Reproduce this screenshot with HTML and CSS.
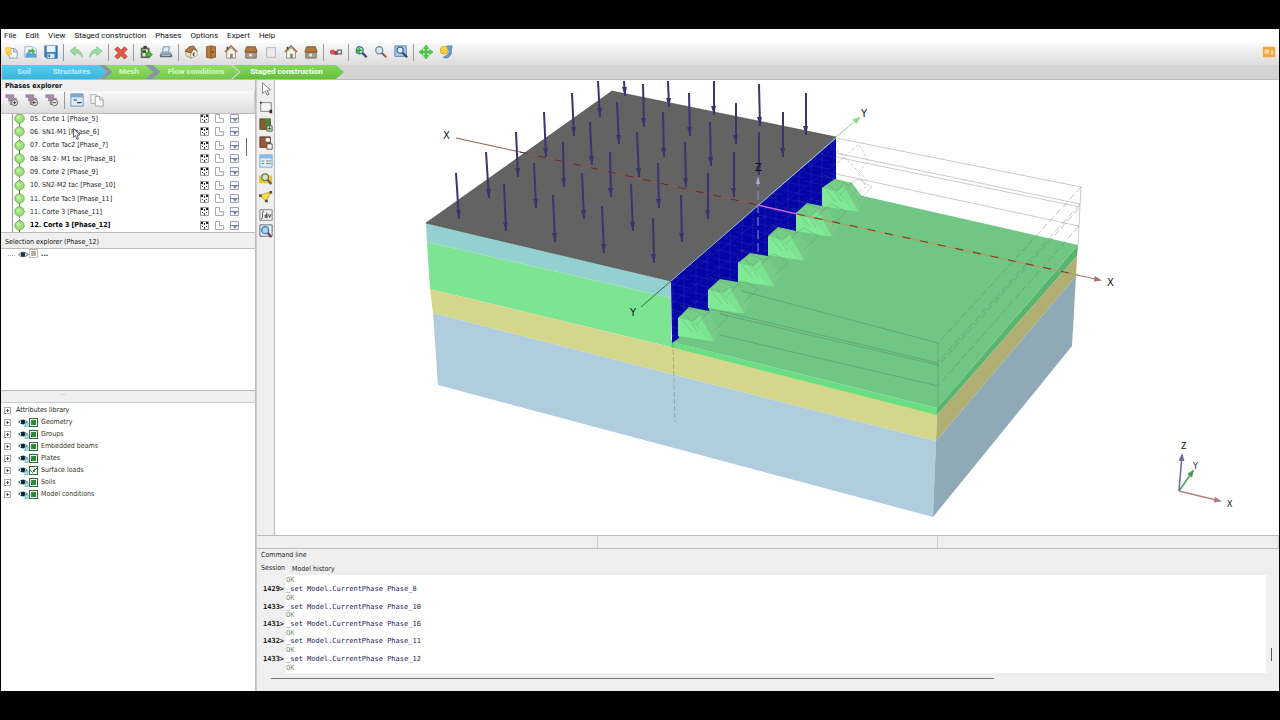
FILE: index.html
```
<!DOCTYPE html>
<html lang="en">

<head>
    <meta charset="UTF-8">
    <title>Staged construction</title>
    <link rel="stylesheet" href="styles.css">
</head>

<body>
    <!-- Icon sprite -->
    <svg class="sprite">
        <symbol id="i-new" viewBox="0 0 16 16"><path d="M6 4h6l3 3v8H6z" fill="#fff" stroke="#7d93b5"/><path d="M11 4v4h4" fill="#cfdcf0" stroke="#7d93b5"/><path d="M1 4l7-2 1 9-6 1z" fill="#f4c544"/><circle cx="4" cy="5" r="3" fill="#fbd65b"/></symbol>
        <symbol id="i-open" viewBox="0 0 16 16"><path d="M1 2h9l4 3v9H1z" fill="#fff" stroke="#88a9cf"/><path d="M2 10l4-3 3 3 2-2 3 3v3H2z" fill="#58a8d4"/><path d="M5 5h4V3l4 4-4 3V8H5z" fill="#4fae4c"/></symbol>
        <symbol id="i-save" viewBox="0 0 16 16"><path d="M1 1h14v14H3l-2-2z" fill="#3e83bb" stroke="#245f94"/><path d="M3 1h10v7H3z" fill="#eaf4fb"/><path d="M4 10h8v5H4z" fill="#dce8ef"/><path d="M5 11h2v3H5z" fill="#3a6a91"/></symbol>
        <symbol id="i-undo" viewBox="0 0 16 16"><path d="M1 7l6-5v3c5 0 8 4 8 9-2-4-4-5-8-5v3z" fill="#9bdba3" stroke="#86c98f"/></symbol>
        <symbol id="i-redo" viewBox="0 0 16 16"><path d="M15 7L9 2v3c-5 0-8 4-8 9 2-4 4-5 8-5v3z" fill="#9bdba3" stroke="#86c98f"/></symbol>
        <symbol id="i-delete" viewBox="0 0 16 16"><path d="M4 2l4 4 4-4 3 3-4 4 4 4-3 3-4-4-4 4-3-3 4-4-4-4z" fill="#e05a48" stroke="#bb4436"/></symbol>
        <symbol id="i-clip" viewBox="0 0 16 16"><path d="M2 3h10v12H2z" fill="#5d6a52"/><path d="M5 1h4v3H5z" fill="#444"/><path d="M4 5h6v8H4z" fill="#dde6cf"/><path d="M4 6h4v3H4z" fill="#3b4a34"/><path d="M8 9h3V7l4 4-4 4v-2H8z" fill="#4ab53c" stroke="#2e8527"/></symbol>
        <symbol id="i-print" viewBox="0 0 16 16"><path d="M5 2h7l-1 6H4z" fill="#d8ecf9" stroke="#6f8ca4"/><path d="M2 8h12l1 4H1z" fill="#9ca8b4"/><path d="M1 11h14v3H1z" fill="#5b6b79"/><path d="M3 12h10" stroke="#bcd"/></symbol>
        <symbol id="i-house3d" viewBox="0 0 16 16"><path d="M2 7l6 2v6l-6-3z" fill="#e9dcc5" stroke="#8a7a66" stroke-width=".7"/><path d="M8 9l3-4 4 2v5l-7 3z" fill="#fff" stroke="#8a7a66" stroke-width=".7"/><path d="M1 7l5-5 5-1 4 6-4-3-3 5z" fill="#b57742" stroke="#704420" stroke-width=".8"/><path d="M10 9l2-1v4l-2 1z" fill="#5a4a3a"/></symbol>
        <symbol id="i-door" viewBox="0 0 16 16"><path d="M3 2l5-1 5 1v12l-5 1-5-1z" fill="#b9803e" stroke="#7a4e20"/><path d="M8 1v14" stroke="#7a4e20"/><circle cx="10" cy="8" r="1" fill="#5a3510"/></symbol>
        <symbol id="i-house" viewBox="0 0 16 16"><path d="M3 8l5-5 5 5v7H3z" fill="#f6f4ee" stroke="#8a8478"/><path d="M1 8l7-7 7 7" fill="none" stroke="#9a6b3c" stroke-width="1.600"/><path d="M7 10h3v5H7z" fill="#8d8070"/><path d="M3 2h2v3H3z" fill="#5b4631"/></symbol>
        <symbol id="i-roof" viewBox="0 0 16 16"><path d="M2 8h12v7H2z" fill="#a69a88" stroke="#776c5c"/><path d="M3 2h10l2 6H1z" fill="#b47a3f" stroke="#7d4f22"/><path d="M6 10h3v3H6z" fill="#eee"/></symbol>
        <symbol id="i-box" viewBox="0 0 16 16"><path d="M3 3h10v11H3z" fill="#ececec" stroke="#a9b0b8"/></symbol>
        <symbol id="i-link" viewBox="0 0 16 16"><circle cx="4" cy="8" r="3" fill="#d65555"/><circle cx="8" cy="9" r="2.500" fill="#b23c3c"/><path d="M9 5h6v6H9z" fill="#6f7276"/><circle cx="12" cy="8" r="1.600" fill="#eee"/></symbol>
        <symbol id="i-zoomin" viewBox="0 0 16 16"><circle cx="6.500" cy="6" r="4" fill="#bfe8c0" stroke="#4a7f9d" stroke-width="1.500"/><path d="M9.500 9l5 5" stroke="#384a72" stroke-width="2.500"/><path d="M3 6h6M6 3v6M2 9l4-3" stroke="#37a63a" stroke-width="1.500"/></symbol>
        <symbol id="i-zoomout" viewBox="0 0 16 16"><circle cx="6" cy="6" r="4" fill="#dbe7f5" stroke="#7a8fb0" stroke-width="1.500"/><path d="M9 9l3 3" stroke="#42507c" stroke-width="2"/><path d="M11 11l3 3" stroke="#b35c48" stroke-width="2.500"/></symbol>
        <symbol id="i-zoomfit" viewBox="0 0 16 16"><path d="M1 1h13v12H1z" fill="#a9cdec" stroke="#4d7aa8"/><circle cx="7" cy="6" r="3.500" fill="#dfeefc" stroke="#3f689b" stroke-width="1.400"/><path d="M10 9l5 5" stroke="#3b4673" stroke-width="2.500"/></symbol>
        <symbol id="i-move" viewBox="0 0 16 16"><path d="M8 0l3 4H9v3h3V5l4 3-4 3V9H9v3h2l-3 4-3-4h2V9H4v2L0 8l4-3v2h3V4H5z" fill="#4fd046" stroke="#2fae2c" stroke-width=".8"/></symbol>
        <symbol id="i-rotate" viewBox="0 0 16 16"><path d="M9 1l6 0-1 5c1 4-1 8-6 9l-3-1 5-3 2-4-3-2z" fill="#5f9fd8" stroke="#3c74ab" stroke-width=".7"/><circle cx="6" cy="6" r="4.500" fill="#f5d33f" stroke="#cfa31c"/></symbol>
        <symbol id="i-add" viewBox="0 0 16 16"><path d="M1 2h9v3H1zM4 6h9v3H4z" fill="#a58fa9" stroke="#7c607f" stroke-width=".6"/><path d="M6 9v4h2" stroke="#666" fill="none"/><circle cx="11" cy="11" r="3.500" fill="#f2e9ef" stroke="#555"/><path d="M9 11h4M11 9v4" stroke="#333"/></symbol>
        <symbol id="i-sub" viewBox="0 0 16 16"><path d="M1 2h9v3H1zM4 6h9v3H4z" fill="#a58fa9" stroke="#7c607f" stroke-width=".6"/><path d="M6 9v4h2" stroke="#666" fill="none"/><circle cx="11" cy="11" r="3.500" fill="#f2e9ef" stroke="#555"/><path d="M9 11h4" stroke="#333"/></symbol>
        <symbol id="i-ins" viewBox="0 0 16 16"><path d="M1 2h9v3H1zM4 6h9v3H4z" fill="#a58fa9" stroke="#7c607f" stroke-width=".6"/><path d="M6 9v4h2" stroke="#666" fill="none"/><circle cx="11" cy="11" r="3.500" fill="#f2e9ef" stroke="#555"/><path d="M9 11h4M11 9l-2 2 2 2" stroke="#333" fill="none"/></symbol>
        <symbol id="i-window" viewBox="0 0 16 16"><path d="M1 1h14v14H1z" fill="#dcebf7" stroke="#6b8fb1"/><path d="M1 1h14v4H1z" fill="#7fa8d0"/><path d="M4 8h4M8 11h5" stroke="#26446b" stroke-width="1.400"/></symbol>
        <symbol id="i-copy" viewBox="0 0 16 16"><path d="M1 2h6l3 2v8H1z" fill="#f4f4f4" stroke="#a8a8a8"/><path d="M6 4h5l4 3v8H6z" fill="#fafafa" stroke="#a0a0a0"/><path d="M11 4v4h4" fill="none" stroke="#a0a0a0"/></symbol>
        <symbol id="i-arrow" viewBox="0 0 16 16"><path d="M4 1l9 8-4 .5 2.500 4.500-2 1-2.300-4.500L4 13z" fill="#fff" stroke="#777"/></symbol>
        <symbol id="i-select" viewBox="0 0 16 16"><path d="M2 3h12v10H2z" fill="#f4f4f4" stroke="#777"/><path d="M1 2h2v2H1zM12 11h3v4h-3z" fill="#3b2528"/></symbol>
        <symbol id="i-soil" viewBox="0 0 16 16"><path d="M1 1h12v12H1z" fill="#8d5a34" stroke="#5e3d22"/><path d="M7 1h6v9H7z" fill="#4b8440"/><path d="M9 9h6v6H9z" fill="#cfe0cc" stroke="#39693b"/><path d="M12 10v4M10 12h4" stroke="#39693b"/></symbol>
        <symbol id="i-cut" viewBox="0 0 16 16"><path d="M1 1h12v12H1z" fill="#98583a" stroke="#693820"/><path d="M7 2h6v5H7zM9 9h6v6H9z" fill="#fff" stroke="#5e4033"/></symbol>
        <symbol id="i-table" viewBox="0 0 16 16"><path d="M1 1h14v14H1z" fill="#dff0fb" stroke="#6fa0cb"/><path d="M1 1h14v4H1z" fill="#86bce8"/><path d="M3 8h3M8 8h6M3 11h3M8 11h6" stroke="#776"/></symbol>
        <symbol id="i-find" viewBox="0 0 16 16"><path d="M0 4h15v9H0z" fill="#e8c83a"/><circle cx="7" cy="6" r="3.800" fill="#cfe6c9" stroke="#6b7b43" stroke-width="1.400"/><path d="M10 9l4 5" stroke="#5b4f72" stroke-width="2.500"/></symbol>
        <symbol id="i-tri" viewBox="0 0 16 16"><path d="M1 6l13-4-6 11z" fill="#fbe04a" stroke="#b3962a"/><path d="M0 5h3v3H0zM12 1h3v3h-3zM7 11h3v3H7z" fill="#4f4a32"/></symbol>
        <symbol id="i-integral" viewBox="0 0 16 16"><path d="M1 2h14v12H1z" fill="#f3f3f3" stroke="#777"/><path d="M6 4c-2-1-2 1-2 4s0 5-2 4M7 8h2v3H7zM9 11V5M11 7l1 4 2-4" fill="none" stroke="#333"/></symbol>
        <symbol id="i-probe" viewBox="0 0 16 16"><path d="M1 1h14v13H1z" fill="#e3eef7" stroke="#51606d"/><circle cx="7" cy="7" r="4" fill="#aed3f3" stroke="#3f77a8" stroke-width="1.500"/><path d="M10 10l4 5" stroke="#6a3d50" stroke-width="2.500"/></symbol>
        <symbol id="i-3d" viewBox="0 0 16 16"><path d="M1 2h14v12H1z" fill="#f0a63c"/><path d="M3 5h5v5H3zM10 6h3v5h-3z" fill="#f8d79c"/></symbol>
        <symbol id="r-dots" viewBox="0 0 9 9"><path d="M.5.5h8v8h-8z" fill="#fff" stroke="#999"/><path d="M1 1h2v2H1zM6 1h2v2H6zM4 2h1v2H4zM2 5h1v1H2zM6 5h1v1H6zM4 6h1v2H4z" fill="#222"/></symbol>
        <symbol id="r-mesh" viewBox="0 0 9 9"><path d="M.5.5h4v4h4v4h-8z" fill="#fff" stroke="#aaa"/></symbol>
        <symbol id="r-water" viewBox="0 0 9 9"><path d="M.5.5h8v8h-8z" fill="#f4f7fa" stroke="#9aa5b1"/><path d="M0 4h9v1H0zM3 5h4L5 8z" fill="#7787a3"/></symbol>
        <symbol id="r-node" viewBox="0 0 11 13"><path d="M5.500 0v13" stroke="#5f7f50"/><circle cx="5.500" cy="6.500" r="4.700" fill="#9de07c" stroke="#5fa548" stroke-width=".8"/><circle cx="4.500" cy="5.500" r="2" fill="#bff0a4"/></symbol>
        <symbol id="r-eye" viewBox="0 0 11 9"><path d="M.5 4.500Q5 0 10.500 4.500 5 9 .5 4.500z" fill="#dfeef5" stroke="#55707f"/><circle cx="5" cy="4.500" r="2.200" fill="#17343f"/></symbol>
        <symbol id="r-eyepage" viewBox="0 0 11 9"><path d="M.5 4Q5 0 9.500 4 5 8 .5 4z" fill="#dfeef5" stroke="#3d7a85"/><circle cx="5" cy="4" r="2.200" fill="#123"/><path d="M7 5h3v4H7z" fill="#b5e9f2" stroke="#4aa3b5" stroke-width=".7"/></symbol>
    </svg>

    <div class="app">
        <nav class="menu">
            <button>File</button>
            <button>Edit</button>
            <button>View</button>
            <button>Staged construction</button>
            <button>Phases</button>
            <button>Options</button>
            <button>Expert</button>
            <button>Help</button>
        </nav>

        <div class="toolbar" id="main-tools"></div>

        <nav class="modes">
            <button class="mode blue soil">Soil</button>
            <button class="mode blue structures">Structures</button>
            <span class="mode gap"></span>
            <button class="mode mesh">Mesh</button>
            <span class="mode gap wide"></span>
            <button class="mode flow">Flow conditions</button>
            <button class="mode staged">Staged construction</button>
        </nav>

        <div class="work">
            <!-- Explorers -->
            <aside class="side">
                <h2 class="title">Phases explorer</h2>
                <div class="toolbar small" id="phase-tools"></div>
                <div class="phases">
                    <ul id="phases"></ul>
                    <div class="thumb"></div>
                    <svg class="cursor" viewBox="0 0 8 12"><path d="M.5.5v9l2-2 1.500 4 1.500-.6L4 7h3z" fill="#fff" stroke="#444" stroke-width=".8"/></svg>
                </div>
                <h2 class="title light">Selection explorer (Phase_12)</h2>
                <div class="selection">
                    <span class="branch"></span>
                    <svg class="eye"><use href="#r-eye"/></svg>
                    <input type="checkbox" class="none" id="sel"><label for="sel">...</label>
                </div>
                <div class="splitter">...</div>
                <ul class="tree" id="tree">
                    <li><button class="expand" aria-label="Expand"></button><span>Attributes library</span></li>
                </ul>
            </aside>

            <main class="main">
                <div class="upper">
                    <div class="vtools" id="side-tools"></div>

                    <!-- Model view -->
                    <svg class="view" viewBox="275 80 1004 455" preserveAspectRatio="xMidYMid meet">
                        <defs>
                            <marker id="head" markerUnits="userSpaceOnUse" markerWidth="6" markerHeight="10" refX="3" refY="9" orient="0"><path d="M0 0h5l-2 9z" fill="#39356f"/></marker>
                            <marker id="tip" markerUnits="userSpaceOnUse" markerWidth="8" markerHeight="6" refX="6" refY="3" orient="auto"><path d="M0 0l8 3-8 3z" fill="context-stroke"/></marker>
                            <pattern id="hatch" width="23" height="17" patternUnits="userSpaceOnUse"><path d="M0 3l23 5M0 11l23 5M0 17L23 0M6 0v17M17 0v17" stroke="#3434c0" stroke-width=".3" fill="none"/></pattern>
                            <g id="berm">
                                <path d="M0 0l13-9 17 4 12 16-6 13-36-6z" fill="#77cb86"/>
                                <path d="M0 0l13-9 12 3-10 10z" fill="#74ce86"/>
                                <path d="M0 0l14 3 18 20-32-5z" fill="#80e996"/>
                                <path d="M15 3l7-5 14 25-4 0z" fill="#7ce391"/>
                                <path d="M4 2l10 12M14 3l6-5M8-3l12 17M30-5l-12 12M2-13l24 10 10-6 14 8-14 14" fill="none" stroke="#57845f" stroke-width=".5" stroke-opacity=".6"/>
                            </g>
                        </defs>

                        <!-- front layers -->
                        <path d="M426 223l245 58v17l-244-56z" fill="#94d0cf"/>
                        <path d="M427 242l244 56v49l-241-58z" fill="#7ce492"/>
                        <path d="M671 342l266 66v8l-266-68z" fill="#69df84"/>
                        <path d="M430 289l241 58 266 68-1 26-265-67-238-61z" fill="#d4d68b"/>
                        <path d="M433 313l238 61 265 67-3 76-495-132z" fill="#b0cddd"/>
                        <!-- right layers -->
                        <path d="M1078 245l-1 11-140 159v-7z" fill="#58b56e"/>
                        <path d="M1077 256l-1 20-140 165 1-26z" fill="#b0ae73"/>
                        <path d="M1076 276l-4 70-139 171 3-76z" fill="#8fa9b6"/>
                        <!-- excavated level -->
                        <path d="M835 178l6 13 237 54-141 163-266-66 9-32z" fill="#70c783"/>

                        <path d="M426 223L612 91l224 46-165 144z" fill="#636363" stroke="#454545" stroke-width=".6"/>
                        <path d="M671 281l165-143v42l-14 9v17l-15-3-11 10v18l-18-4-10 9v20l-18-3-12 10v19l-18-3-11 10v22l-20-4-10 10v21l-7 5z" fill="#0505a6"/>
                        <path d="M671 281l165-143v42l-14 9v17l-15-3-11 10v18l-18-4-10 9v20l-18-3-12 10v19l-18-3-11 10v22l-20-4-10 10v21l-7 5z" fill="url(#hatch)"/>
                        <path d="M671 281l165-143" stroke="#8fb8d8"/>
                        <use href="#berm" x="822" y="188"/>
                        <use href="#berm" x="796" y="213"/>
                        <use href="#berm" x="768" y="237"/>
                        <use href="#berm" x="738" y="263"/>
                        <use href="#berm" x="708" y="290"/>
                        <use href="#berm" x="678" y="318"/>

                        <!-- hidden outlines -->
                        <g class="ghost">
                            <path d="M836 138l245 49M836 153l244 51M836 157l244 50M836 174l243 52M1081 187l-3 58"/>
                            <path d="M837 163l22-19 9 17-10 11 8 15-12 8M837 150l30 30" stroke-dasharray="3 2"/>
                        </g>
                        <g class="ghost dark">
                            <path d="M742 291l196 52M720 311l218 52M720 314l218 51M720 335l218 51M938 343v65"/>
                            <path d="M1081 187L938 343M1080 204L938 362M1079 208L938 366M1079 226L938 386" stroke-dasharray="7 3"/>
                            <path d="M673 343l2 79" stroke-dasharray="5 2"/>
                        </g>

                        <!-- axes -->
                        <path d="M456 138l64 14 238 53" stroke="#8e5b58" fill="none"/>
                        <path d="M520 152l238 53" stroke="#5e2f2f" stroke-dasharray="8 10"/>
                        <path d="M758 205l39 9" stroke="#c46ad4" stroke-width="1.500"/>
                        <path d="M797 214l281 61" stroke="#a5a468" stroke-width="1.500"/>
                        <path d="M797 214l281 61" stroke="#7c4434" stroke-width="1.200" stroke-dasharray="8 10"/>
                        <path d="M1077 275l23 5" stroke="#b07272" marker-end="url(#tip)"/>
                        <path d="M836 137l23-19" stroke="#8fd495" marker-end="url(#tip)"/>
                        <path d="M671 281l-30 26" stroke="#386c43"/>
                        <path d="M758 252v-76" stroke="#8f8fd0" stroke-dasharray="9 4"/>
                        <path d="M756 184l2-8 2 8z" fill="#a9a9dc"/>
                        <g id="loads" stroke="#39356f" stroke-width="2" fill="none"></g>

                        <g class="axis-name">
                            <text x="443" y="139">X</text>
                            <text x="861" y="117">Y</text>
                            <text x="755" y="171">Z</text>
                            <text x="630" y="316">Y</text>
                            <text x="1107" y="286">X</text>
                            <text class="mini" x="1181" y="449">Z</text>
                            <text class="mini" x="1193" y="469">Y</text>
                            <text class="mini" x="1227" y="507">X</text>
                        </g>
                        <g stroke-width="1.500" fill="none">
                            <path d="M1179 491l3-36" stroke="#6a67a3" marker-end="url(#tip)"/>
                            <path d="M1179 491l14-20" stroke="#4b9c59" marker-end="url(#tip)"/>
                            <path d="M1179 491l41 10" stroke="#b57f82" marker-end="url(#tip)"/>
                        </g>
                    </svg>
                </div>

                <div class="status"><span></span><span></span><span></span></div>

                <section class="command">
                    <h2>Command line</h2>
                    <div class="tabs">
                        <button>Session</button>
                        <button class="back">Model history</button>
                    </div>
                    <div class="console">
                        <div class="log" id="log"></div>
                        <div class="vbar"></div>
                    </div>
                    <div class="hbar"></div>
                </section>
            </main>
        </div>
    </div>

    <script src="app.js"></script>
</body>

</html>
```

FILE: styles.css
```
body {
    margin: 0;
    height: 100vh;
    box-sizing: border-box;
    padding: 29px 1px;
    background: #000;
    color: #222;
    font-family: Roboto, sans-serif;
    font-size: 8px;
    line-height: 10px;
    display: flex;
}

h2,
ul {
    margin: 0;
    padding: 0;
    list-style: none;
}

button {
    margin: 0;
    padding: 0;
    border: 0;
    background: none;
    color: inherit;
    font: inherit;
    white-space: nowrap;
}

.sprite {
    position: absolute;
    width: 0;
    height: 0;
}

.app {
    flex: 1;
    min-width: 0;
    display: flex;
    flex-direction: column;
    background: #efefef;
}

.menu {
    height: 14px;
    padding-left: 3px;
    display: flex;
    gap: 9px;
    background: #fff;
    color: #111;
}

/* Toolbars */
.toolbar {
    height: 22px;
    display: flex;
    align-items: flex-start;
    padding-top: 1px;
    box-sizing: border-box;
    background: linear-gradient(#fafafa, #dcdcdc);
}

.toolbar button {
    width: 20px;
    height: 16px;
    display: grid;
    place-items: center;
}

.toolbar svg {
    width: 14px;
    height: 14px;
}

.toolbar .sep {
    width: 1px;
    height: 17px;
    margin: 0 2px;
    background: #9a9a9a;
}

.toolbar .last {
    margin-left: auto;
}

.toolbar.small {
    padding-left: 1px;
    border-right: 1px solid #ccc;
}

/* Mode arrows */
.modes {
    height: 14px;
    padding-left: 1px;
    display: flex;
    background: #d4d4d4;
    border-bottom: 1px solid #bbb;
    font-weight: bold;
    color: #d9f7c9;
}

.mode {
    margin-left: -8px;
    background: linear-gradient(#93dd68, #72ca48);
    clip-path: polygon(0 0, calc(100% - 8px) 0, 100% 50%, calc(100% - 8px) 100%, 0 100%, 8px 50%);
}

.mode.blue {
    background: linear-gradient(#55cbed, #39b6de);
    color: #bdeefb;
}

.mode.soil {
    width: 48px;
    margin-left: 0;
    padding-right: 4px;
    clip-path: none;
}

.mode.structures {
    width: 65px;
    padding-right: 6px;
}

.mode.gap {
    width: 14px;
    background: #83999b;
}

.mode.gap.wide {
    width: 16px;
}

.mode.mesh {
    width: 48px;
}

.mode.flow {
    width: 86px;
}

.mode.staged {
    width: 111px;
    margin-left: -6px;
    padding-right: 4px;
    background: linear-gradient(#86d65a, #64c038);
    color: #fff;
}

.work {
    flex: 1;
    min-height: 0;
    display: flex;
    font-family: "DejaVu Sans Condensed", "DejaVu Sans", sans-serif;
    font-size: 7px;
}

/* Explorers */
.side {
    width: 254px;
    display: flex;
    flex-direction: column;
    border-right: 1px solid #bbb;
}

.title {
    height: 11px;
    padding-left: 4px;
    font-size: 7px;
    line-height: 12px;
    color: #111;
}

.title.light {
    font-weight: normal;
    line-height: 10px;
    border-top: 4px solid #efefef;
}

.phases {
    position: relative;
    height: 118px;
    overflow: hidden;
    background: #fff;
    border: solid #bbb;
    border-width: 1px 0;
}

#phases {
    height: 120px;
    margin: -2px 10px 0 11px;
    border-left: 1px solid #999;
    display: grid;
    grid-auto-rows: 1fr;
    box-sizing: border-box;
}

#phases li {
    padding-left: 1px;
    display: flex;
    align-items: center;
}

#phases li.current {
    font-weight: bold;
    color: #000;
}

#phases span {
    flex: 1;
    margin-left: 5px;
}

#phases svg {
    width: 9px;
    height: 9px;
    margin-right: 6px;
}

#phases svg.node {
    width: 11px;
    height: 13px;
    margin: 0;
}

.thumb {
    position: absolute;
    right: 8px;
    top: 24px;
    width: 1px;
    height: 18px;
    background: #666;
}

.cursor {
    position: absolute;
    left: 72px;
    top: 14px;
    width: 8px;
    height: 12px;
}

.selection {
    height: 141px;
    display: flex;
    align-items: flex-start;
    padding-left: 7px;
    background: #fff;
    border: solid #bbb;
    border-width: 1px 0;
}

.branch {
    width: 7px;
    margin: 6px 3px 0 0;
    border-top: 1px dotted #aaa;
}

.eye {
    width: 11px;
    height: 9px;
    margin-top: 1px;
}

.selection label {
    margin-left: 3px;
    font-weight: bold;
}

input[type="checkbox"] {
    appearance: none;
    box-sizing: border-box;
    width: 9px;
    height: 9px;
    margin: 0;
    border: 1px solid #2f6b35;
    background: #fff;
    padding: 1px;
}

input[type="checkbox"]:indeterminate {
    background: #2e8b3a content-box;
}

/* tick made of two strokes */
input[type="checkbox"]:checked {
    background:
        linear-gradient(45deg, transparent 35%, #2e8b3a 35%, #2e8b3a 65%, transparent 65%) 0 3px / 3px 3px no-repeat,
        linear-gradient(-45deg, transparent 40%, #2e8b3a 40%, #2e8b3a 60%, transparent 60%) 2px 1px / 5px 5px no-repeat,
        #fff;
}

input[type="checkbox"].none {
    border-color: #bbb;
    background: #b5b09a content-box;
}

.splitter {
    height: 11px;
    text-align: center;
    padding-right: 130px;
    line-height: 4px;
    color: #aaa;
    border-bottom: 1px solid #ccc;
}

.tree {
    flex: 1;
    padding-top: 1px;
    background: #fff;
}

.tree li {
    height: 12px;
    padding-left: 3px;
    display: flex;
    align-items: center;
}

.tree label {
    margin-left: 3px;
    color: #332;
}

.tree li > span {
    margin-left: 5px;
}

.tree .eye {
    margin: 0 0 0 7px;
}

.expand {
    width: 7px;
    height: 7px;
    box-sizing: border-box;
    border: 1px solid #aaa;
    background:
        linear-gradient(#555, #555) center / 3px 1px no-repeat,
        linear-gradient(#555, #555) center / 1px 3px no-repeat;
}

/* Model side */
.main {
    flex: 1;
    min-width: 0;
    border-left: 1px solid #ccc;
    display: flex;
    flex-direction: column;
}

.upper {
    flex: 1;
    min-height: 0;
    display: flex;
}

.vtools {
    width: 17px;
    border-right: 1px solid #bbb;
    display: grid;
    grid-template-rows: minmax(0, 158px);
    grid-template-rows: repeat(8, 18px);
    align-content: start;
}

.vtools button {
    display: grid;
    place-items: center;
}

.vtools svg {
    width: 14px;
    height: 14px;
}

.view {
    flex: 1;
    min-width: 0;
    height: 100%;
    background: #fff;
}

.ghost {
    fill: none;
    stroke: #b5b5b5;
    stroke-width: .7;
}

.ghost.dark {
    stroke: #4f7a5b;
    stroke-opacity: .6;
}

.axis-name {
    font-family: "DejaVu Sans", sans-serif;
    font-size: 10px;
    fill: #111;
}

.axis-name .mini {
    font-size: 8px;
}

.status {
    height: 12px;
    display: flex;
    border: solid #bbb;
    border-width: 1px 0;
}

.status span {
    flex: 1;
    border-right: 1px solid #d0d0d0;
}

/* Command line */
.command {
    height: 142px;
    padding-left: 4px;
}

.command h2 {
    height: 11px;
    font-size: 7px;
    font-weight: normal;
    line-height: 12px;
}

.tabs {
    height: 15px;
    display: flex;
    gap: 7px;
    align-items: center;
}

.tabs .back {
    padding-top: 2px;
}

.console {
    height: 98px;
    display: flex;
    background: linear-gradient(90deg, #f0f0f0 25px, #fff 25px);
}

.log {
    flex: 1;
    height: 96px;
    padding: 1px 0 0 2px;
    display: grid;
    grid-auto-rows: 1fr;
    align-items: center;
    font-family: "DejaVu Sans Mono", monospace;
    line-height: 8px;
}

.log div {
    display: flex;
}

.log b {
    width: 23px;
    color: #222;
}

.log code {
    font-family: inherit;
    color: #22225c;
}

.log .ok {
    padding-left: 23px;
    color: #6f946f;
}

.vbar {
    width: 8px;
    padding: 73px 0 0 5px;
    background: #f0f0f0;
}

.vbar::before {
    content: "";
    display: block;
    width: 1px;
    height: 13px;
    background: #555;
}

.hbar {
    width: 71%;
    height: 1px;
    margin: 5px 0 0 10px;
    background: #777;
}
```

FILE: app.js
```
const icon = (id, cls = '') => `<svg class="${cls}"><use href="#${id}"/></svg>`;

// Toolbars, '|' is a separator
function fillTools(id, names) {
    document.getElementById(id).innerHTML = names.split(' ').map(n =>
        n === '|' ? '<span class="sep"></span>' : `<button aria-label="${n}">${icon('i-' + n)}</button>`
    ).join('');
}
fillTools('main-tools', 'new open save | undo redo | delete | clip print | house3d door house roof box house roof | link | zoomin zoomout zoomfit | move rotate 3d');
document.querySelector('#main-tools button:last-child').classList.add('last');
fillTools('phase-tools', 'add ins sub | window copy');
fillTools('side-tools', 'arrow select soil cut table find tri integral probe');

// Phases
const phases = [
    '05. Corte 1 [Phase_5]',
    '06. SN1-M1 [Phase_6]',
    '07. Corte Tac2 [Phase_7]',
    '08. SN 2- M1 tac [Phase_8]',
    '09. Corte 2 [Phase_9]',
    '10. SN2-M2 tac [Phase_10]',
    '11. Corte Tac3 [Phase_11]',
    '11. Corte 3 [Phase_11]',
    '12. Corte 3 [Phase_12]'
];
document.getElementById('phases').innerHTML = phases.map((p, i) =>
    `<li class="${i === phases.length - 1 ? 'current' : ''}">${icon('r-node', 'node')}<span>${p}</span>` +
    icon('r-dots') + icon('r-mesh') + icon('r-water') + '</li>'
).join('');

// Attributes library
const groups = ['Geometry', 'Groups', 'Embedded beams', 'Plates', 'Surface loads', 'Soils', 'Model conditions'];
const tree = document.getElementById('tree');
groups.forEach((g, i) => {
    const li = document.createElement('li');
    li.innerHTML = `<button class="expand" aria-label="Expand"></button>${icon('r-eyepage', 'eye')}` +
        `<input type="checkbox" id="g${i}"><label for="g${i}">${g}</label>`;
    const box = li.querySelector('input');
    if (g === 'Surface loads') {
        box.checked = true;
    } else {
        box.indeterminate = true;
    }
    tree.appendChild(li);
});

// Surface load arrows: x1, y1, x2, y2
const loads = [
    [456, 173, 459, 219], [486, 152, 489, 198], [516, 132, 518, 177], [544, 112, 546, 157],
    [572, 93, 574, 136], [598, 81, 600, 117], [624, 81, 625, 96], [643, 84, 644, 127],
    [617, 102, 619, 144], [590, 122, 592, 165], [563, 142, 564, 187], [534, 163, 536, 208],
    [504, 184, 506, 231], [553, 195, 555, 242], [582, 173, 584, 219], [610, 152, 611, 197],
    [637, 132, 639, 177], [602, 206, 604, 253], [631, 184, 633, 231], [658, 163, 659, 208],
    [653, 218, 654, 263], [668, 81, 669, 107], [689, 93, 690, 136], [714, 81, 714, 115],
    [736, 103, 736, 144], [759, 84, 760, 126], [806, 93, 806, 135], [783, 112, 783, 157],
    [759, 132, 759, 175], [710, 122, 711, 166], [663, 112, 664, 157], [685, 142, 686, 187],
    [734, 152, 734, 197], [708, 173, 708, 219], [681, 195, 682, 242]
];
document.getElementById('loads').innerHTML = loads.map(([a, b, c, d]) =>
    `<path d="M${a} ${b}L${c} ${d}" marker-end="url(#head)"/>`
).join('');

// Session log
const log = [[1429, 8], [1433, 10], [1431, 16], [1432, 11], [1433, 12]];
document.getElementById('log').innerHTML = '<div class="ok">OK</div>' + log.map(([n, p]) =>
    `<div><b>${n}&gt;</b><code>_set Model.CurrentPhase Phase_${p}</code></div><div class="ok">OK</div>`
).join('');
```
